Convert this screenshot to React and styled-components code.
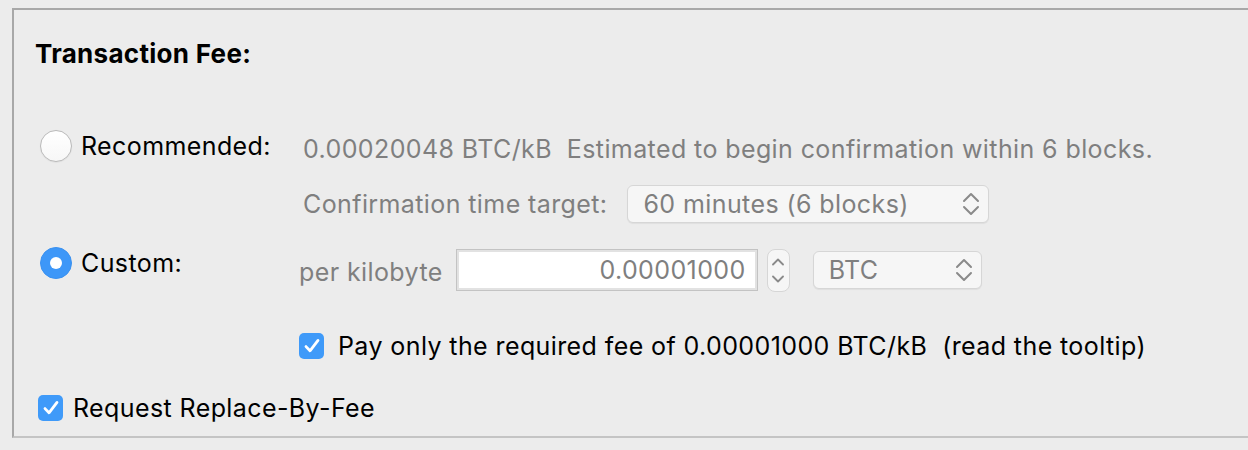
import React from "react";
import styled, { createGlobalStyle } from "styled-components";

const Global = createGlobalStyle`
  html, body { margin: 0; padding: 0; background: #ececec; }
  body { font-family: Inter, "Noto Sans", sans-serif; -webkit-font-smoothing: antialiased; }
  #root { width: 1248px; height: 450px; overflow: hidden; }
`;

const Frame = styled.section`
  box-sizing: border-box;
  margin: 8px 0 0 12px;
  width: 1260px;
  height: 430px;
  border-top: 2px solid #a8a8a8;
  border-left: 2px solid #a8a8a8;
  border-bottom: 2px solid #c4c4c4;
  padding: 29px 0 0 21px;
  display: flex;
  flex-direction: column;
`;

const Title = styled.h2`
  margin: 0;
  height: 30px;
  line-height: 30px;
  font-size: 26px;
  letter-spacing: 0.3px;
  font-weight: 700;
  color: #000;
`;

const Row = styled.div`
  display: flex;
  align-items: center;
  height: ${(p) => p.$h}px;
  margin-top: ${(p) => p.$top}px;
`;

const LeftCell = styled.div`
  width: 264px;
  flex: none;
  display: flex;
  align-items: center;
  gap: ${(p) => p.$gap || 9}px;
  padding-left: ${(p) => p.$pl || 0}px;
  box-sizing: border-box;
  align-self: ${(p) => (p.$start ? "flex-start" : "center")};
  margin-top: ${(p) => p.$mt || 0}px;
`;

const Label = styled.span`
  font-size: 25px;
  letter-spacing: 0.4px;
  color: #000;
  white-space: nowrap;
  margin-left: ${(p) => p.$ml || 0}px;
`;

const Muted = styled.span`
  font-size: 25px;
  letter-spacing: 0.4px;
  color: #7f7f7f;
  white-space: nowrap;
  padding-left: ${(p) => p.$pl || 0}px;
  padding-top: ${(p) => p.$pt || 0}px;
`;

const Radio = styled.span`
  box-sizing: border-box;
  width: 32px;
  height: 32px;
  border-radius: 50%;
  flex: none;
  display: flex;
  align-items: center;
  justify-content: center;
  background: ${(p) => (p.$on ? "#3d97f8" : "linear-gradient(#ffffff, #f7f7f7)")};
  border: 1px solid ${(p) => (p.$on ? "#3a91f0" : "#bababa")};
  box-shadow: ${(p) => (p.$on ? "none" : "0 0.5px 1px rgba(0,0,0,0.08)")};
  &::after {
    content: "";
    display: ${(p) => (p.$on ? "block" : "none")};
    width: 12px;
    height: 12px;
    border-radius: 50%;
    background: #fff;
  }
`;

const Box = styled.span`
  box-sizing: border-box;
  width: 25px;
  height: 26px;
  border-radius: 5px;
  background: #3f9af9;
  flex: none;
  display: flex;
  align-items: center;
  justify-content: center;
`;

const Popup = styled.div`
  box-sizing: border-box;
  width: ${(p) => p.$w}px;
  height: 38px;
  border-radius: 6px;
  background: #f6f6f6;
  border: 1px solid #d6d6d6;
  box-shadow: 0 1px 1px rgba(0, 0, 0, 0.06);
  display: flex;
  align-items: center;
  justify-content: space-between;
  padding: 0 8px 0 15px;
  font-size: 25px;
  letter-spacing: 0.4px;
  color: #7f7f7f;
  margin-left: ${(p) => p.$ml || 0}px;
  flex: none;
`;

const Field = styled.div`
  box-sizing: border-box;
  width: 302px;
  height: 42px;
  background: #fff;
  border: 1px solid #c3c3c3;
  box-shadow: inset 0 0 0 2px #e2e2e2;
  display: flex;
  align-items: center;
  justify-content: flex-end;
  padding-right: 11px;
  font-size: 25px;
  letter-spacing: 0.4px;
  color: #7f7f7f;
  margin-left: 13px;
  flex: none;
`;

const Spinner = styled.div`
  box-sizing: border-box;
  width: 23px;
  height: 43px;
  border-radius: 8px;
  background: #f6f6f6;
  border: 1px solid #d6d6d6;
  margin-left: 9px;
  display: flex;
  align-items: center;
  justify-content: center;
  flex: none;
`;

const Check = () => (
  <svg width="18" height="18" viewBox="0 0 18 18">
    <path d="M3 9.6 L7 13.8 L15 3.4" fill="none" stroke="#fff" strokeWidth="2.8" strokeLinecap="round" strokeLinejoin="round" />
  </svg>
);

const Chevrons = () => (
  <svg width="18" height="24" viewBox="0 0 18 24">
    <path d="M2 9 L9 2 L16 9" fill="none" stroke="#8a8a8a" strokeWidth="2" strokeLinecap="round" strokeLinejoin="round" />
    <path d="M2 15 L9 22 L16 15" fill="none" stroke="#8a8a8a" strokeWidth="2" strokeLinecap="round" strokeLinejoin="round" />
  </svg>
);

const SmallChevrons = () => (
  <svg width="12" height="25" viewBox="0 0 12 25">
    <path d="M1 6.5 L6 1.5 L11 6.5" fill="none" stroke="#8a8a8a" strokeWidth="1.8" strokeLinecap="round" strokeLinejoin="round" />
    <path d="M1 18.5 L6 23.5 L11 18.5" fill="none" stroke="#8a8a8a" strokeWidth="1.8" strokeLinecap="round" strokeLinejoin="round" />
  </svg>
);

export default function App() {
  return (
    <>
      <Global />
      <Frame>
        <Title>Transaction Fee:</Title>

        <Row $h={32} $top={61}>
          <LeftCell $pl={5}>
            <Radio />
            <Label>Recommended:</Label>
          </LeftCell>
          <Muted $pl={4} $pt={5}>
            0.00020048 BTC/kB&nbsp;&nbsp;Estimated to begin confirmation within 6 blocks.
          </Muted>
        </Row>

        <Row $h={38} $top={23}>
          <LeftCell />
          <Muted $pl={4} $pt={-4}>Confirmation time target:</Muted>
          <Popup $w={362} $ml={20}>
            <span>60 minutes (6 blocks)</span>
            <Chevrons />
          </Popup>
        </Row>

        <Row $h={42} $top={26}>
          <LeftCell $pl={5} $start $mt={-2}>
            <Radio $on />
            <Label>Custom:</Label>
          </LeftCell>
          <Muted $pt={4}>per kilobyte</Muted>
          <Field>0.00001000</Field>
          <Spinner>
            <SmallChevrons />
          </Spinner>
          <Popup $w={169} $ml={23}>
            <span>BTC</span>
            <Chevrons />
          </Popup>
        </Row>

        <Row $h={28} $top={41}>
          <LeftCell />
          <Box>
            <Check />
          </Box>
          <Label $ml={14}>
            Pay only the required fee of 0.00001000 BTC/kB&nbsp;&nbsp;(read the tooltip)
          </Label>
        </Row>

        <Row $h={28} $top={34}>
          <LeftCell $pl={3} $gap={10}>
            <Box>
              <Check />
            </Box>
            <Label>Request Replace-By-Fee</Label>
          </LeftCell>
        </Row>
      </Frame>
    </>
  );
}
